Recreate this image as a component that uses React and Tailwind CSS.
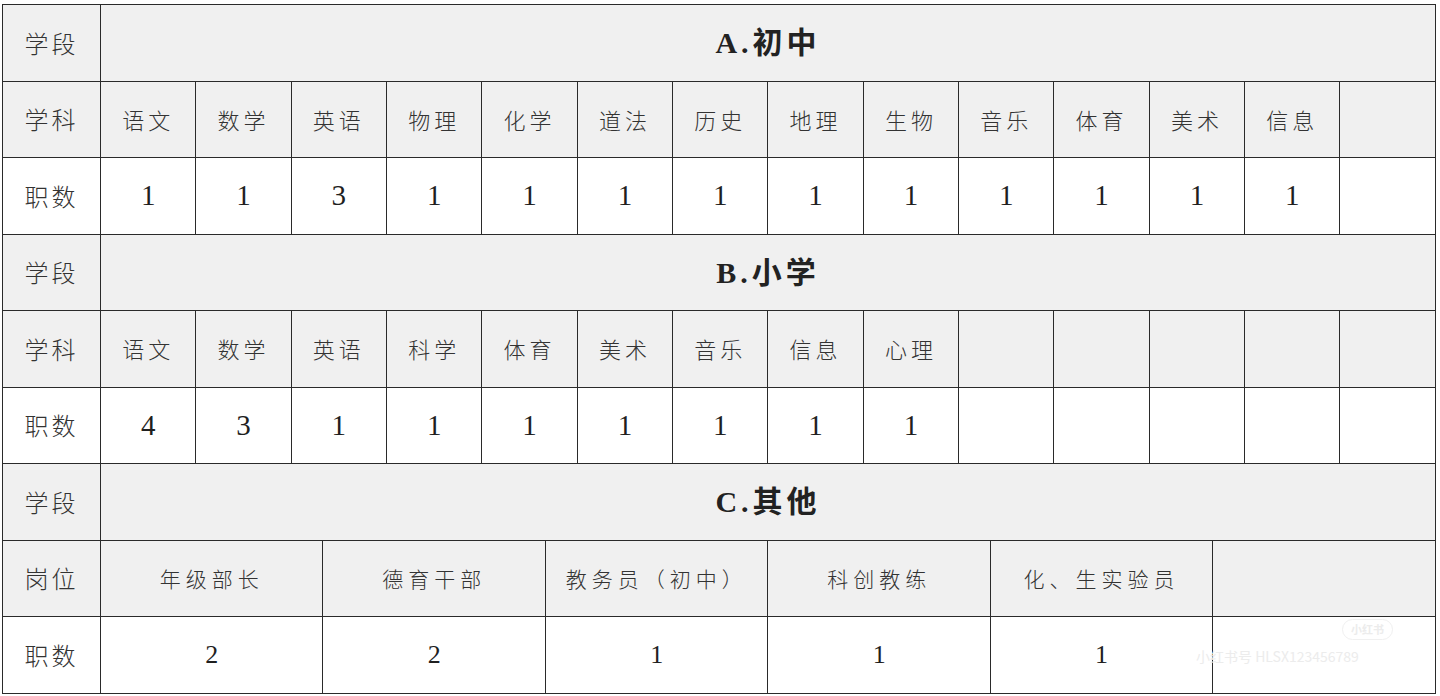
import React from 'react';

const juniorSubjects = ['语文', '数学', '英语', '物理', '化学', '道法', '历史', '地理', '生物', '音乐', '体育', '美术', '信息', ''];
const juniorCounts = ['1', '1', '3', '1', '1', '1', '1', '1', '1', '1', '1', '1', '1', ''];
const primarySubjects = ['语文', '数学', '英语', '科学', '体育', '美术', '音乐', '信息', '心理', '', '', '', '', ''];
const primaryCounts = ['4', '3', '1', '1', '1', '1', '1', '1', '1', '', '', '', '', ''];
const posts = ['年级部长', '德育干部', '教务员（初中）', '科创教练', '化、生实验员', ''];
const postCounts = ['2', '2', '1', '1', '1', ''];

const cjk = "font-['Noto_Sans_CJK_SC',sans-serif]";
const serif = "font-['Liberation_Serif','Noto_Sans_CJK_SC',serif]";

const cell = 'border border-[#2a2a2a] text-center align-middle p-0';

const Label = ({ children }) => (
  <td className={`${cell} bg-[#f0f0f0] ${cjk} text-[24px] font-light tracking-[3px] text-[#333]`}>{children}</td>
);

const StageRow = ({ title }) => (
  <tr className="h-[76.5px]">
    <Label>学段</Label>
    <td colSpan={42} className={`${cell} bg-[#f0f0f0] ${serif} text-[30px] font-semibold tracking-[4px] text-[#222]`}>
      {title}
    </td>
  </tr>
);

const SubjectRow = ({ items }) => (
  <tr className="h-[76.5px]">
    <Label>学科</Label>
    {items.map((s, i) => (
      <td key={i} colSpan={3} className={`${cell} bg-[#f0f0f0] ${cjk} text-[22px] font-light tracking-[4px] text-[#333]`}>
        {s}
      </td>
    ))}
  </tr>
);

const CountRow = ({ items, span, size }) => (
  <tr className="h-[76.5px]">
    <td className={`${cell} bg-white ${cjk} text-[24px] font-light tracking-[3px] text-[#333]`}>职数</td>
    {items.map((n, i) => (
      <td key={i} colSpan={span} className={`${cell} bg-white ${serif} ${size} text-[#1f1f1f]`}>
        {n}
      </td>
    ))}
  </tr>
);

const App = () => {
  return (
    <div className="relative h-[696px] w-[1440px] overflow-hidden bg-white pl-[2px] pt-[4px]">
      <table className="w-[1434px] table-fixed border-collapse">
        <colgroup>
          <col className="w-[98px]" />
          {Array.from({ length: 42 }).map((_, i) => (
            <col key={i} />
          ))}
        </colgroup>
        <tbody>
          <StageRow title="A.初中" />
          <SubjectRow items={juniorSubjects} />
          <CountRow items={juniorCounts} span={3} size="text-[29px]" />
          <StageRow title="B.小学" />
          <SubjectRow items={primarySubjects} />
          <CountRow items={primaryCounts} span={3} size="text-[29px]" />
          <StageRow title="C.其他" />
          <tr className="h-[76.5px]">
            <Label>岗位</Label>
            {posts.map((p, i) => (
              <td key={i} colSpan={7} className={`${cell} bg-[#f0f0f0] ${cjk} text-[21px] font-light tracking-[5px] text-[#333]`}>
                {p}
              </td>
            ))}
          </tr>
          <CountRow items={postCounts} span={7} size="text-[26px]" />
        </tbody>
      </table>

      {/* watermark */}
      <div className="absolute left-[1342px] top-[619px] rounded-full border border-[#f0f0f0] px-[8px] py-[1px] text-[11px] font-bold text-[#ececec] font-['Noto_Sans_CJK_SC',sans-serif]">
        小红书
      </div>
      <div className="absolute left-[1196px] top-[646px] text-[14px] text-[#ececec] font-['Noto_Sans_CJK_SC',sans-serif]">
        小红书号 HLSX123456789
      </div>
    </div>
  );
};

export default App;
